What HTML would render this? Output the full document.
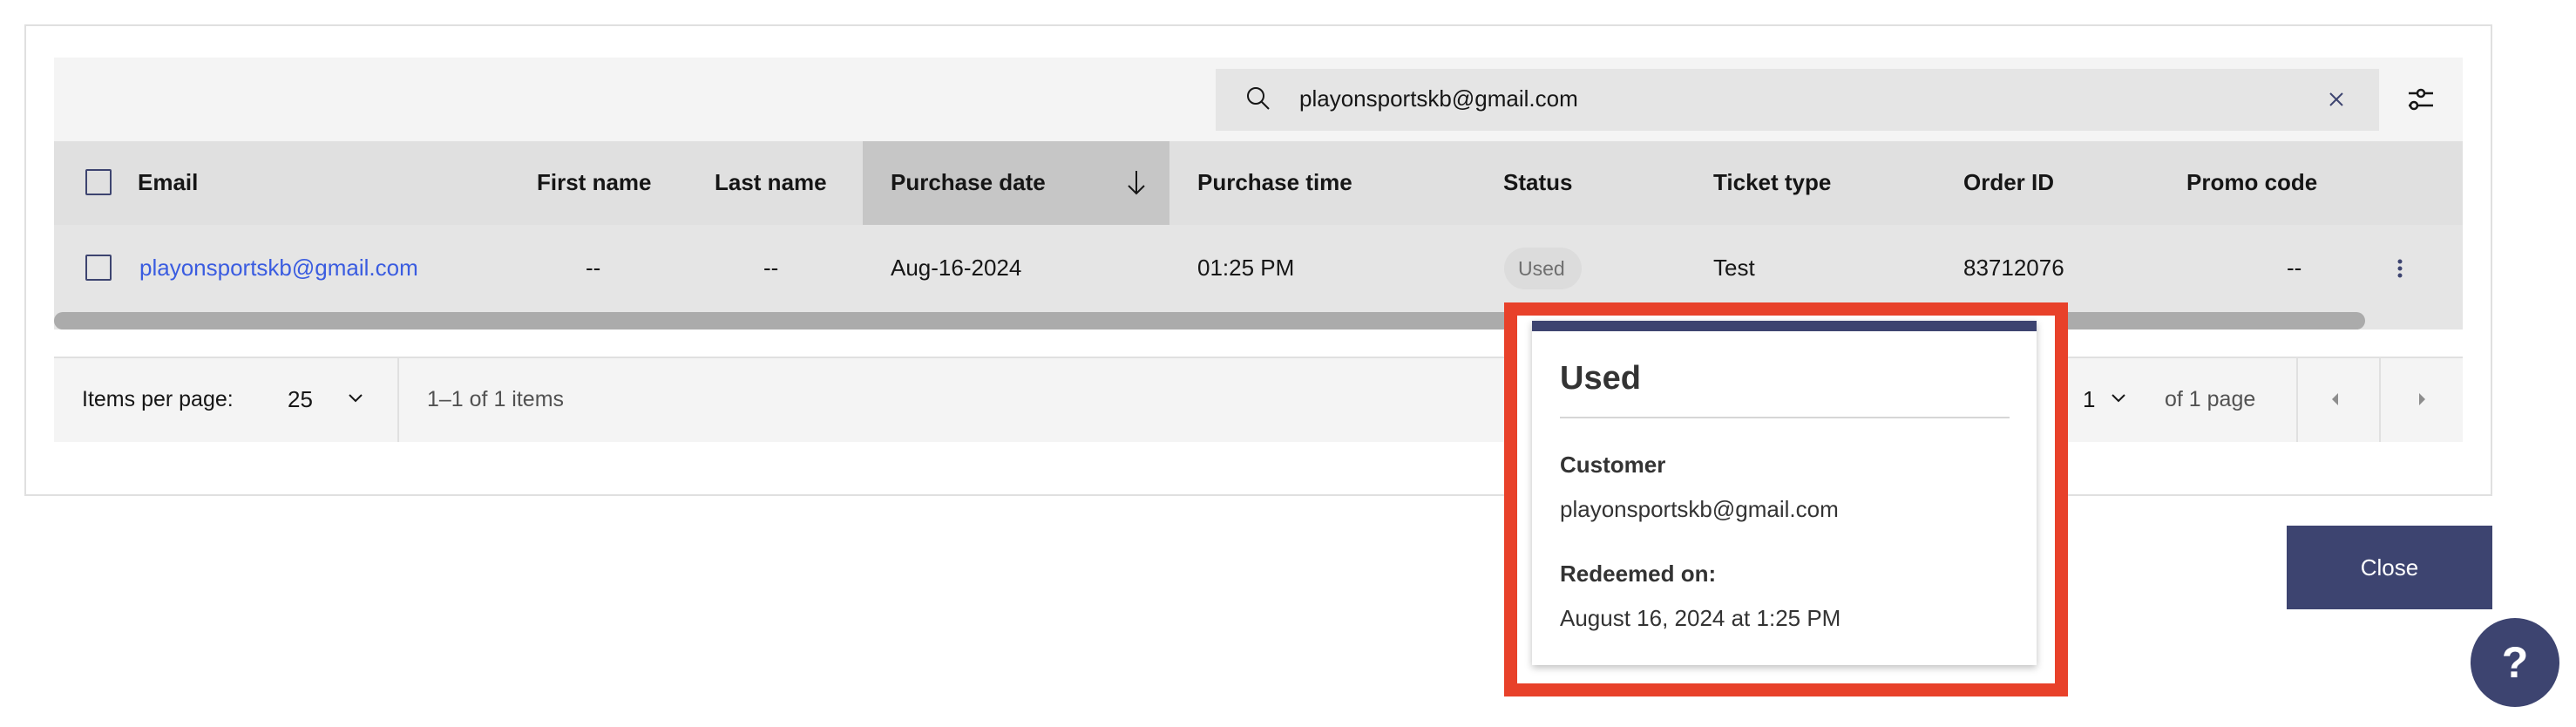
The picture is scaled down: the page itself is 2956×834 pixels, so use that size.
<!DOCTYPE html>
<html><head><meta charset="utf-8"><style>
*{box-sizing:border-box;margin:0;padding:0}
body{width:2956px;height:834px;background:#fff;position:relative;overflow:hidden;font-family:"Liberation Sans",sans-serif;color:#161616}
.a{position:absolute}
.t{position:absolute;font-size:26px;line-height:30px;white-space:nowrap}
.b{font-weight:bold}
.cb{position:absolute;width:30px;height:30px;border:2px solid #3d4470;border-radius:2px}
</style></head><body>
<div class="a" style="left:28px;top:28px;width:2832px;height:541px;border:2px solid #e0e0e0"></div>
<div class="a" style="left:62px;top:66px;width:2764px;height:96px;background:#f4f4f4"></div>
<div class="a" style="left:1395px;top:79px;width:1335px;height:71px;background:#e5e5e5"></div>
<svg class="a" style="left:1428px;top:97px" width="32" height="32" viewBox="0 0 32 32"><circle cx="13" cy="13" r="9" fill="none" stroke="#161616" stroke-width="2"/><line x1="19.5" y1="19.5" x2="28" y2="28" stroke="#161616" stroke-width="2"/></svg>
<div class="t" style="left:1491px;top:98px">playonsportskb@gmail.com</div>
<svg class="a" style="left:2671px;top:104px" width="20" height="20" viewBox="0 0 20 20"><path d="M3 3L17 17M17 3L3 17" stroke="#3d4470" stroke-width="2"/></svg>
<svg class="a" style="left:2762px;top:98px" width="32" height="32" viewBox="0 0 32 32"><path d="M2 9H12M20 9H30M2 23H4M12 23H30" stroke="#161616" stroke-width="2.5"/><circle cx="16" cy="9" r="4" fill="none" stroke="#161616" stroke-width="2.5"/><circle cx="8" cy="23" r="4" fill="none" stroke="#161616" stroke-width="2.5"/></svg>
<div class="a" style="left:62px;top:162px;width:2764px;height:96px;background:#e0e0e0"></div>
<div class="a" style="left:990px;top:162px;width:352px;height:96px;background:#c6c6c6"></div>
<div class="cb" style="left:98px;top:194px"></div>
<div class="t b" style="left:158px;top:194px">Email</div>
<div class="t b" style="left:616px;top:194px">First name</div>
<div class="t b" style="left:820px;top:194px">Last name</div>
<div class="t b" style="left:1022px;top:194px">Purchase date</div>
<svg class="a" style="left:1292px;top:194px" width="24" height="30" viewBox="0 0 24 30"><path d="M12 2V28M3 19L12 28L21 19" fill="none" stroke="#161616" stroke-width="2"/></svg>
<div class="t b" style="left:1374px;top:194px">Purchase time</div>
<div class="t b" style="left:1725px;top:194px">Status</div>
<div class="t b" style="left:1966px;top:194px">Ticket type</div>
<div class="t b" style="left:2253px;top:194px">Order ID</div>
<div class="t b" style="left:2509px;top:194px">Promo code</div>
<div class="a" style="left:62px;top:258px;width:2764px;height:120px;background:#e5e5e5"></div>
<div class="cb" style="left:98px;top:292px"></div>
<div class="t" style="left:160px;top:292px;color:#3a5ce0">playonsportskb@gmail.com</div>
<div class="t" style="left:672px;top:292px">--</div>
<div class="t" style="left:876px;top:292px">--</div>
<div class="t" style="left:1022px;top:292px">Aug-16-2024</div>
<div class="t" style="left:1374px;top:292px">01:25 PM</div>
<div class="a" style="left:1726px;top:284px;width:89px;height:48px;background:#dcdcdc;border-radius:24px"></div>
<div class="t" style="left:1742px;top:293px;font-size:23px;color:#6f6f6f">Used</div>
<div class="t" style="left:1966px;top:292px">Test</div>
<div class="t" style="left:2253px;top:292px">83712076</div>
<div class="t" style="left:2624px;top:292px">--</div>
<svg class="a" style="left:2748px;top:294px" width="12" height="30" viewBox="0 0 12 30"><circle cx="6" cy="6" r="2.5" fill="#3d4470"/><circle cx="6" cy="14" r="2.5" fill="#3d4470"/><circle cx="6" cy="22" r="2.5" fill="#3d4470"/></svg>
<div class="a" style="left:62px;top:358px;width:2652px;height:20px;background:#ababab;border-radius:10px"></div>
<div class="a" style="left:62px;top:409px;width:2764px;height:98px;background:#f4f4f4;border-top:2px solid #e0e0e0"></div>
<div class="t" style="left:94px;top:443px;font-size:25px">Items per page:</div>
<div class="t" style="left:330px;top:443px">25</div>
<svg class="a" style="left:398px;top:450px" width="20" height="14" viewBox="0 0 20 14"><path d="M3 3L10 10L17 3" fill="none" stroke="#161616" stroke-width="2"/></svg>
<div class="a" style="left:456px;top:411px;width:2px;height:96px;background:#e0e0e0"></div>
<div class="t" style="left:490px;top:443px;font-size:25px;color:#525252">1–1 of 1 items</div>
<div class="t" style="left:2390px;top:443px">1</div>
<svg class="a" style="left:2421px;top:450px" width="20" height="14" viewBox="0 0 20 14"><path d="M3 3L10 10L17 3" fill="none" stroke="#161616" stroke-width="2"/></svg>
<div class="t" style="left:2484px;top:443px;font-size:25px;color:#525252">of 1 page</div>
<div class="a" style="left:2635px;top:411px;width:2px;height:96px;background:#e0e0e0"></div>
<div class="a" style="left:2730px;top:411px;width:2px;height:96px;background:#e0e0e0"></div>
<svg class="a" style="left:2673px;top:448px" width="14" height="20" viewBox="0 0 14 20"><path d="M10 3L3 10L10 17Z" fill="#8d8d8d"/></svg>
<svg class="a" style="left:2772px;top:448px" width="14" height="20" viewBox="0 0 14 20"><path d="M4 3L11 10L4 17Z" fill="#8d8d8d"/></svg>
<div class="a" style="left:2624px;top:603px;width:236px;height:96px;background:#3d4470"></div>
<div class="t" style="left:2624px;top:636px;width:236px;text-align:center;color:#fff">Close</div>
<div class="a" style="left:2835px;top:709px;width:102px;height:102px;border-radius:50%;background:#3d4470"></div>
<div class="t b" style="left:2835px;top:735px;width:102px;text-align:center;color:#fff;font-size:50px;line-height:50px">?</div>
<div class="a" style="left:1726px;top:347px;width:647px;height:452px;border:15px solid #e8412a;background:#fff"></div>
<div class="a" style="left:1758px;top:368px;width:579px;height:395px;background:#fff;box-shadow:0 3px 8px rgba(0,0,0,.25)"></div>
<div class="a" style="left:1758px;top:368px;width:579px;height:12px;background:#3d4470"></div>
<div class="t b" style="left:1790px;top:412px;font-size:38px;line-height:44px;color:#333">Used</div>
<div class="a" style="left:1790px;top:478px;width:516px;height:2px;background:#d6d6d6"></div>
<div class="t b" style="left:1790px;top:518px;color:#333">Customer</div>
<div class="t" style="left:1790px;top:569px;color:#333">playonsportskb@gmail.com</div>
<div class="t b" style="left:1790px;top:643px;color:#333">Redeemed on:</div>
<div class="t" style="left:1790px;top:694px;color:#333">August 16, 2024 at 1:25 PM</div>
</body></html>
